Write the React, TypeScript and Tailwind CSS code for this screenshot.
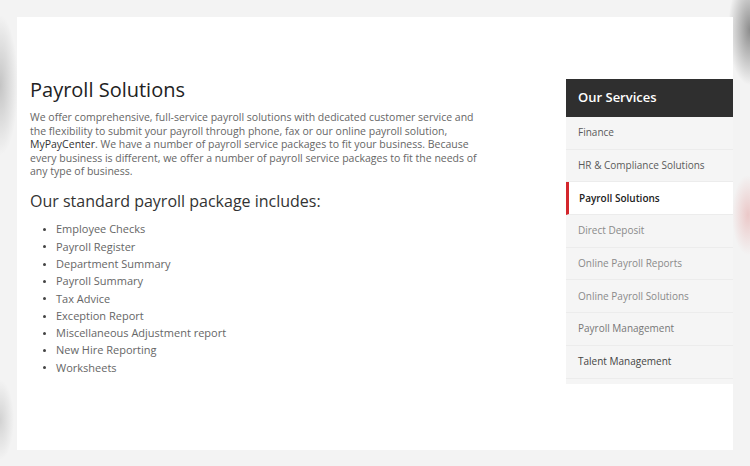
const packageItems = [
  "Employee Checks",
  "Payroll Register",
  "Department Summary",
  "Payroll Summary",
  "Tax Advice",
  "Exception Report",
  "Miscellaneous Adjustment report",
  "New Hire Reporting",
  "Worksheets",
];

const services = [
  { label: "Finance", color: "text-[#5a5a5a]" },
  { label: "HR & Compliance Solutions", color: "text-[#5a5a5a]" },
  { label: "Payroll Solutions", color: "text-[#222]", active: true },
  { label: "Direct Deposit", color: "text-[#8a8a8a]" },
  { label: "Online Payroll Reports", color: "text-[#8a8a8a]" },
  { label: "Online Payroll Solutions", color: "text-[#8a8a8a]" },
  { label: "Payroll Management", color: "text-[#777]" },
  { label: "Talent Management", color: "text-[#444]" },
];

export default function App() {
  return (
    <div
      className="w-[750px] h-[466px] overflow-hidden p-[17px] bg-[#f3f3f3] bg-[radial-gradient(ellipse_18px_70px_at_0px_85px,#c4c4c4,transparent),radial-gradient(ellipse_14px_40px_at_0px_420px,#d2d2d2,transparent),radial-gradient(ellipse_22px_55px_at_750px_30px,#8c8c8c,transparent),radial-gradient(ellipse_16px_40px_at_748px_215px,#ebc8c8,transparent)]"
      style={{ fontFamily: '"Open Sans", "Liberation Sans", sans-serif' }}
    >
      <div className="flex h-[433px] w-[716px] bg-white">
        <main className="w-[549px] pl-[13px] pt-[61px] text-[#666]">
          <h1 className="text-[20px] leading-[24px] font-medium text-[#222]">Payroll Solutions</h1>
          <p className="mt-[9px] w-[460px] text-[10.5px] leading-[13.6px]">
            We offer comprehensive, full-service payroll solutions with dedicated customer service and
            the flexibility to submit your payroll through phone, fax or our online payroll solution,{" "}
            <span className="inline-block h-[13.6px] text-[#333]">MyPayCenter</span>. We have a number of payroll service
            packages to fit your business. Because every business is different, we offer a number of
            payroll service packages to fit the needs of any type of business.
          </p>
          <h2 className="mt-[12px] text-[16px] leading-[20px] font-medium text-[#333]">
            Our standard payroll package includes:
          </h2>
          <ul className="mt-[10px] pl-[13px]">
            {packageItems.map((item) => (
              <li key={item} className="flex items-center h-[17.3px] text-[11px]">
                <span className="w-[3px] h-[3px] rounded-full bg-[#444] mr-[10px]" />
                {item}
              </li>
            ))}
          </ul>
        </main>

        <aside className="mt-[62px] w-[167px] self-start">
          <div className="flex h-[38px] items-center bg-[#2f2f2f] px-[12px] text-[13px] font-semibold text-white">
            Our Services
          </div>
          <div className="bg-[#f5f5f5] pb-[5px]">
            {services.map((s) => (
              <div
                key={s.label}
                className={`flex h-[32.7px] items-center border-b border-[#ececec] px-[12px] text-[10px] ${s.color} ${
                  s.active ? "bg-white border-l-[3px] border-l-[#d3262c] pl-[10px] font-semibold" : ""
                }`}
              >
                {s.label}
              </div>
            ))}
          </div>
        </aside>
      </div>
    </div>
  );
}
